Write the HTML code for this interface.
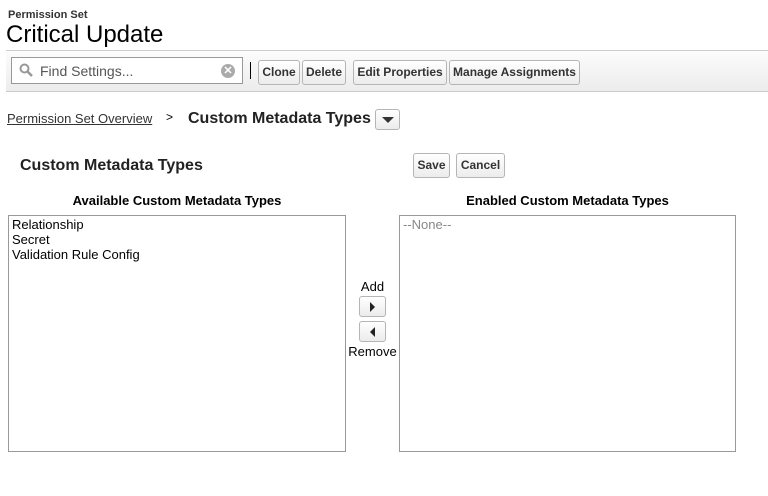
<!DOCTYPE html>
<html><head><style>
body{margin:0;width:768px;height:496px;background:#fff;font-family:"Liberation Sans",Arial,sans-serif;position:relative;overflow:hidden;color:#000}
.a{position:absolute}
.btn{position:absolute;border:1px solid #b5b5b5;border-radius:3px;background:linear-gradient(#fff,#ececec);font-weight:bold;font-size:12px;color:#333;line-height:23px;text-align:center;box-sizing:border-box;height:25px}
.box{position:absolute;border:1px solid #999;background:#fff;box-sizing:border-box;font-size:13px;padding:1px 3px;line-height:15px}
</style></head><body>
<div class="a" style="left:8px;top:9px;font-size:11px;font-weight:bold;color:#333">Permission Set</div>
<div class="a" style="left:6px;top:21px;font-size:24px;">Critical Update</div>
<div class="a" style="left:6px;top:50px;width:762px;height:40px;border-top:1px solid #ccc;border-bottom:1px solid #ccc;background:linear-gradient(#fcfcfc,#ececec)"></div>
<div class="a" style="left:11px;top:57px;width:232px;height:27px;border:1px solid #999;background:#fff;box-sizing:border-box"></div>
<svg class="a" style="left:19px;top:63px" width="14" height="14"><circle cx="5.5" cy="5.5" r="4" fill="none" stroke="#999" stroke-width="2"/><line x1="8.5" y1="8.5" x2="13" y2="13" stroke="#999" stroke-width="2.5"/></svg>
<div class="a" style="left:40px;top:63px;font-size:14px;color:#555">Find Settings...</div>
<div class="a" style="left:221px;top:64px;width:14px;height:14px;border-radius:50%;background:#aaa;color:#fff;font-size:11px;line-height:14px;text-align:center;font-weight:bold">✕</div>
<div class="a" style="left:250px;top:62px;width:1px;height:17px;background:#000"></div>
<div class="btn" style="left:258px;top:60px;width:42px">Clone</div>
<div class="btn" style="left:302px;top:60px;width:44px">Delete</div>
<div class="btn" style="left:353px;top:60px;width:94px">Edit Properties</div>
<div class="btn" style="left:449px;top:60px;width:131px">Manage Assignments</div>
<div class="a" style="left:7px;top:111px;font-size:13px;color:#333;text-decoration:underline">Permission Set Overview</div>
<div class="a" style="left:166px;top:110px;font-size:12px">&gt;</div>
<div class="a" style="left:188px;top:110px;font-size:16px;font-weight:bold;color:#222">Custom Metadata Types</div>
<div class="btn" style="left:375px;top:109px;width:25px;height:21px"></div>
<div class="a" style="left:382px;top:117px;width:0;height:0;border-left:6px solid transparent;border-right:6px solid transparent;border-top:6px solid #333"></div>
<div class="a" style="left:20px;top:157px;font-size:16px;font-weight:bold;color:#222">Custom Metadata Types</div>
<div class="btn" style="left:413px;top:153px;width:37px">Save</div>
<div class="btn" style="left:456px;top:153px;width:49px">Cancel</div>
<div class="a" style="left:8px;top:193px;width:338px;text-align:center;font-size:13px;font-weight:bold">Available Custom Metadata Types</div>
<div class="a" style="left:399px;top:193px;width:337px;text-align:center;font-size:13px;font-weight:bold">Enabled Custom Metadata Types</div>
<div class="box" style="left:8px;top:215px;width:338px;height:237px">Relationship<br>Secret<br>Validation Rule Config</div>
<div class="box" style="left:399px;top:215px;width:337px;height:237px;color:#888">--None--</div>
<div class="a" style="left:346px;top:279px;width:53px;text-align:center;font-size:13px">Add</div>
<div class="btn" style="left:359px;top:296px;width:27px;height:21px"></div>
<div class="a" style="left:370px;top:302px;border-top:5px solid transparent;border-bottom:5px solid transparent;border-left:5px solid #222"></div>
<div class="btn" style="left:359px;top:321px;width:27px;height:21px"></div>
<div class="a" style="left:370px;top:327px;border-top:5px solid transparent;border-bottom:5px solid transparent;border-right:5px solid #222"></div>
<div class="a" style="left:344px;top:344px;width:57px;text-align:center;font-size:13px">Remove</div>
</body></html>
